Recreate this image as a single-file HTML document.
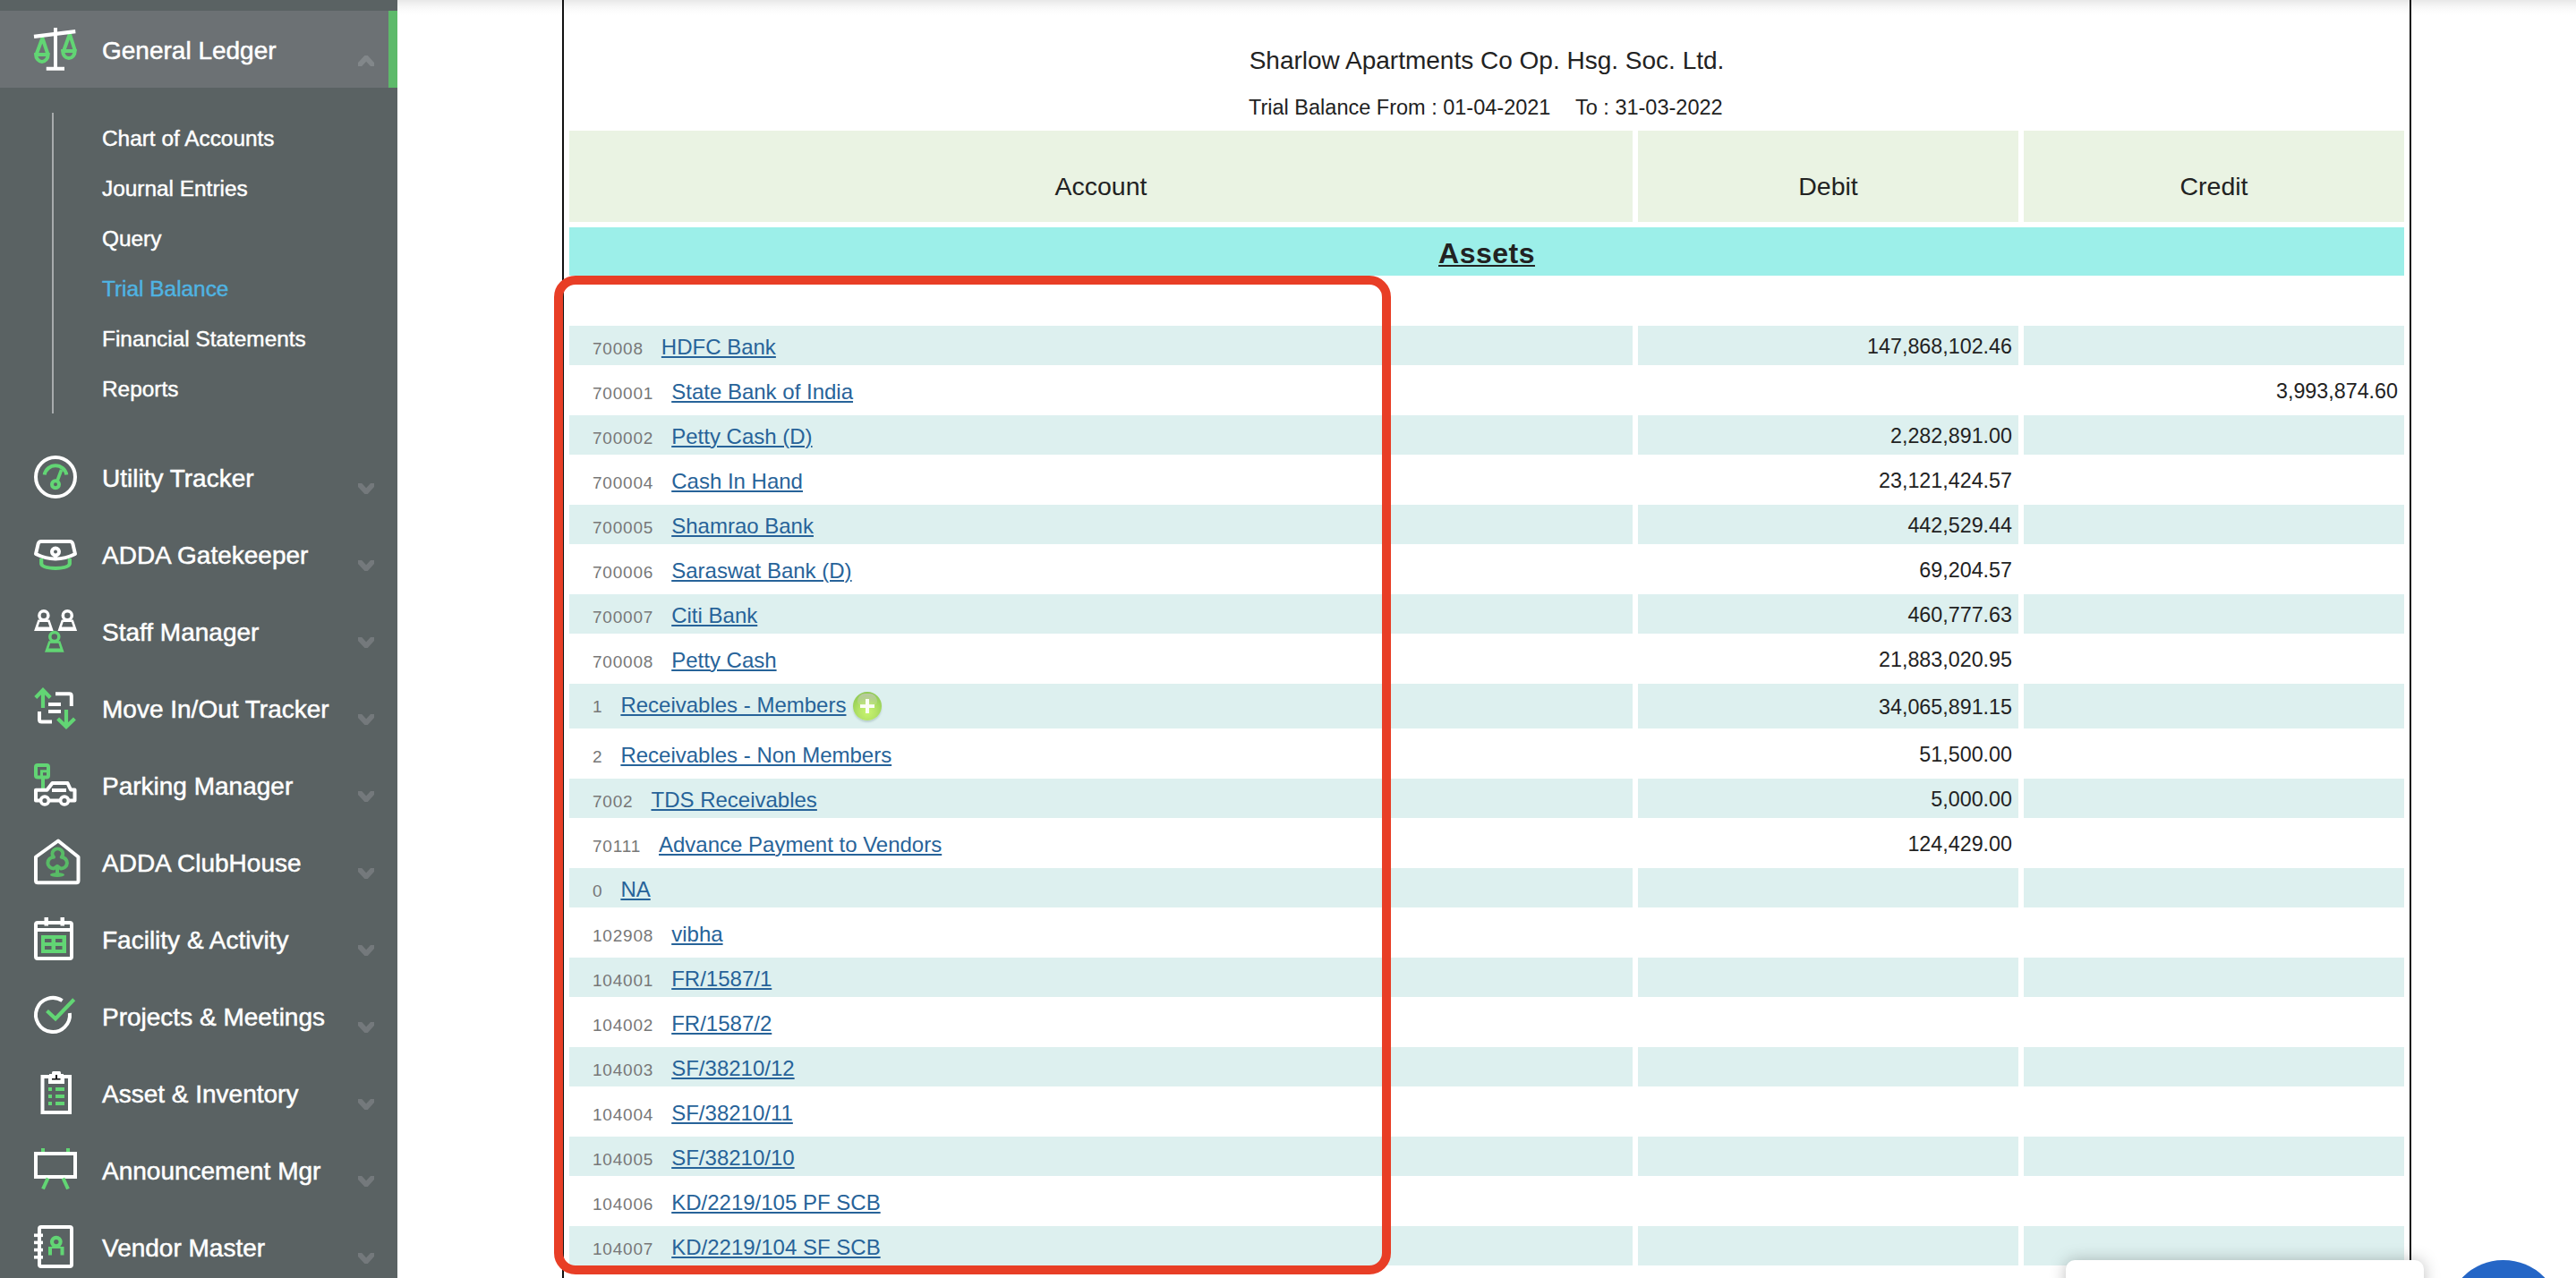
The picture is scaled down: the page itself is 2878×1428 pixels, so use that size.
<!DOCTYPE html>
<html><head><meta charset="utf-8">
<style>
*{box-sizing:border-box;margin:0;padding:0}
html,body{width:2878px;height:1428px;overflow:hidden;background:#fff;font-family:"Liberation Sans",sans-serif}
#sb{position:absolute;left:0;top:0;width:444px;height:1428px;background:#5a6263}
#glh{position:absolute;left:0;top:12px;width:444px;height:86px;background:#6c7174}
#glh .bar{position:absolute;right:0;top:0;width:10px;height:86px;background:#5dba6a}
.ico{position:absolute;left:30px}
.t{position:absolute;left:114px;line-height:1;color:#fff;font-size:28px;white-space:nowrap;-webkit-text-stroke:0.5px #fff}
.chev{position:absolute;left:400px}
#subline{position:absolute;left:58px;top:126px;width:2px;height:336px;background:#a8abad}
.sub{position:absolute;left:114px;color:#fff;font-size:24.4px;white-space:nowrap;line-height:1;-webkit-text-stroke:0.45px currentColor}
#shadow{position:absolute;left:444px;top:0;width:2434px;height:18px;background:linear-gradient(#e8e8e8,#f6f6f6 7px,#fcfcfc 12px,#fff 18px)}
#lline{position:absolute;left:628px;top:0;width:2px;height:1428px;background:#111}
#rline{position:absolute;left:2692px;top:0;width:2px;height:1428px;background:#111}
.title{position:absolute;color:#222;white-space:nowrap;line-height:1}
.hdr{position:absolute;top:146px;height:102px;background:#eaf3e3}
.ht{position:absolute;top:193.9px;color:#222;font-size:28.5px;line-height:1;white-space:nowrap;text-align:center}
.assets{position:absolute;left:636px;top:254px;width:2050px;height:54px;background:#9cefe9}
.at{position:absolute;left:636px;width:2050px;top:266.9px;text-align:center;font-weight:bold;font-size:32px;line-height:1;color:#222;letter-spacing:0.5px}
.at span{text-decoration:underline;text-decoration-thickness:2px;text-underline-offset:2px}
.row{position:absolute;left:636px;width:2050px}
.row .c1,.row .c2,.row .c3{position:absolute;top:0;height:100%}
.row .c1{left:0;width:1188px}
.row .c2{left:1194px;width:425px}
.row .c3{left:1625px;width:425px}
.row.s .c1,.row.s .c2,.row.s .c3{background:#ddf0ef}
.cl{position:absolute;left:26px;top:11.7px;white-space:nowrap;font-size:24px;line-height:1}
.code{display:inline-block;font-size:19px;letter-spacing:0.8px;line-height:1;color:#777;margin-right:20px}
.row a{font-size:24px;line-height:1;color:#276399;text-decoration:underline;text-decoration-thickness:2px;text-underline-offset:2px}
.am{position:absolute;top:12.3px;font-size:23.3px;line-height:1;color:#222;text-align:right;white-space:nowrap}
.am.d{right:438px}
.am.c{right:7px}
.plus{display:inline-block;vertical-align:top;margin-left:8px;margin-top:-3px;position:relative;width:32px;height:32px;border-radius:50%;background:radial-gradient(circle at 50% 70%,#c8f56e 0,#b5e467 35%,#93cd55 75%,#7fb84a 100%);box-shadow:0 2px 2px rgba(120,150,150,0.35)}
.plus:before{content:"";position:absolute;left:8px;top:14px;width:16px;height:4px;background:#fbfdf5}
.plus:after{content:"";position:absolute;left:14px;top:8px;width:4px;height:16px;background:#fbfdf5}
.plus i{position:absolute;left:5px;top:2px;width:22px;height:13px;border-radius:11px 11px 6px 6px;background:linear-gradient(rgba(190,200,170,0.9),rgba(210,240,170,0.2))}
.row.b .am{top:15.3px}
#redbox{position:absolute;left:619px;top:308px;width:935px;height:1116px;border:10px solid #e83e26;border-radius:24px}
#popup{position:absolute;left:2308px;top:1408px;width:400px;height:60px;background:#fff;border-radius:10px;box-shadow:0 0 18px rgba(0,0,0,0.25)}
#fab{position:absolute;left:2733px;top:1408px;width:128px;height:128px;border-radius:50%;background:#2566c6}
</style></head><body>
<div id="sb">
<div id="glh"><div class="bar"></div></div>
<div id="subline"></div>
<div class="sub" style="top:143.3px">Chart of Accounts</div>
<div class="sub" style="top:199.3px">Journal Entries</div>
<div class="sub" style="top:255.3px">Query</div>
<div class="sub" style="top:311.3px;color:#4fb3e2">Trial Balance</div>
<div class="sub" style="top:367.3px">Financial Statements</div>
<div class="sub" style="top:423.3px">Reports</div>
<svg class="ico" style="top:23px" width="64" height="64" viewBox="0 0 64 64"><rect x="30" y="8" width="4" height="47" fill="#ffffff"/><rect x="21.75" y="51.75" width="20.25" height="4" fill="#ffffff"/>
<path d="M10.5 38 L17.4 19.5 L23.6 38" fill="none" stroke="#62d574" stroke-width="4" stroke-linejoin="round"/>
<path d="M10.1 37.9 H23.7 A6.8 8 0 0 1 10.1 37.9 Z" fill="none" stroke="#62d574" stroke-width="4"/>
<path d="M41 34.2 L47.9 15 L54 34.2" fill="none" stroke="#62d574" stroke-width="4" stroke-linejoin="round"/>
<path d="M40.1 34.1 H53.7 A6.8 7.9 0 0 1 40.1 34.1 Z" fill="none" stroke="#62d574" stroke-width="4"/>
<line x1="8" y1="17.9" x2="54.3" y2="12.1" stroke="#ffffff" stroke-width="4.3"/></svg>
<div class="t" style="top:42.7px">General Ledger</div>
<svg class="chev" style="top:62px" width="18" height="12" viewBox="0 0 18 12"><path d="M0 12 H4.2 L9.1 6.7 L14 12 H18 V8 L10.8 0 H7.4 L0 8 Z" fill="#82878a"/></svg>
<svg class="ico" style="top:501px" width="64" height="64" viewBox="0 0 64 64"><circle cx="32" cy="32" r="22" fill="none" stroke="#ffffff" stroke-width="4"/>
<path d="M19.7 29.5 A12.5 12.5 0 0 1 44.3 29.5" fill="none" stroke="#62d574" stroke-width="4"/>
<line x1="34.3" y1="35.5" x2="38.6" y2="24" stroke="#62d574" stroke-width="3.6"/>
<circle cx="32" cy="40.2" r="4" fill="none" stroke="#62d574" stroke-width="4"/></svg>
<div class="t" style="top:520.7px">Utility Tracker</div>
<svg class="chev" style="top:540px" width="18" height="12" viewBox="0 0 18 12"><path d="M0 0 H4.2 L9.1 5.3 L14 0 H18 V4 L10.8 12 H7.4 L0 4 Z" fill="#74797c"/></svg>
<svg class="ico" style="top:587px" width="64" height="64" viewBox="0 0 64 64"><path d="M16 18 H48 Q50.5 18 51.3 20.5 L54 32 Q32 43 10 32 L12.7 20.5 Q13.5 18 16 18 Z" fill="none" stroke="#ffffff" stroke-width="4" stroke-linejoin="round"/>
<circle cx="32" cy="29.5" r="4" fill="none" stroke="#ffffff" stroke-width="4"/><rect x="30" y="33" width="4" height="4" fill="#ffffff"/>
<path d="M16.2 37 V43 Q17 47.5 32 48 Q47 47.5 47.8 43 V37" fill="none" stroke="#62d574" stroke-width="4.2"/></svg>
<div class="t" style="top:606.7px">ADDA Gatekeeper</div>
<svg class="chev" style="top:626px" width="18" height="12" viewBox="0 0 18 12"><path d="M0 0 H4.2 L9.1 5.3 L14 0 H18 V4 L10.8 12 H7.4 L0 4 Z" fill="#74797c"/></svg>
<svg class="ico" style="top:673px" width="64" height="64" viewBox="0 0 64 64"><path fill-rule="evenodd" fill="#ffffff" d="M12.149999999999999 14.8 a6.75 6.75 0 1 0 13.5 0 a6.75 6.75 0 1 0 -13.5 0 Z M15.649999999999999 14.8 a3.25 3.25 0 1 0 6.5 0 a3.25 3.25 0 1 0 -6.5 0 Z"/>
<path fill-rule="evenodd" fill="#ffffff" d="M12.399999999999999 19.5 H25.4 L29.7 32.0 H8.099999999999998 Z M14.299999999999999 22.0 H23.5 L25.299999999999997 27.6 H12.499999999999998 Z"/><path fill-rule="evenodd" fill="#ffffff" d="M38.55 14.8 a6.75 6.75 0 1 0 13.5 0 a6.75 6.75 0 1 0 -13.5 0 Z M42.05 14.8 a3.25 3.25 0 1 0 6.5 0 a3.25 3.25 0 1 0 -6.5 0 Z"/>
<path fill-rule="evenodd" fill="#ffffff" d="M38.8 19.5 H51.8 L56.099999999999994 32.0 H34.5 Z M40.699999999999996 22.0 H49.9 L51.699999999999996 27.6 H38.9 Z"/><path fill-rule="evenodd" fill="#62d574" d="M24.05 38.6 a6.75 6.75 0 1 0 13.5 0 a6.75 6.75 0 1 0 -13.5 0 Z M27.55 38.6 a3.25 3.25 0 1 0 6.5 0 a3.25 3.25 0 1 0 -6.5 0 Z"/>
<path fill-rule="evenodd" fill="#62d574" d="M24.3 43.300000000000004 H37.3 L41.6 55.8 H20.0 Z M26.200000000000003 45.800000000000004 H35.4 L37.2 51.400000000000006 H24.4 Z"/></svg>
<div class="t" style="top:692.7px">Staff Manager</div>
<svg class="chev" style="top:712px" width="18" height="12" viewBox="0 0 18 12"><path d="M0 0 H4.2 L9.1 5.3 L14 0 H18 V4 L10.8 12 H7.4 L0 4 Z" fill="#74797c"/></svg>
<svg class="ico" style="top:759px" width="64" height="64" viewBox="0 0 64 64"><path d="M18 32 V12 M9.8 20.5 L18 12 L26.2 20.5" fill="none" stroke="#62d574" stroke-width="4.2"/>
<path d="M32 16.2 H47.5 Q49.8 16.2 49.8 18.5 V30" fill="none" stroke="#ffffff" stroke-width="4"/>
<rect x="24" y="26" width="14" height="4" fill="#ffffff"/><rect x="24" y="34" width="14" height="4" fill="#ffffff"/>
<path d="M14 36 V45 Q14 47.6 16.5 47.6 H28" fill="none" stroke="#ffffff" stroke-width="4"/>
<path d="M44 34 V53 M34.6 44 L44 53 L53.4 44" fill="none" stroke="#62d574" stroke-width="4.2"/></svg>
<div class="t" style="top:778.7px">Move In/Out Tracker</div>
<svg class="chev" style="top:798px" width="18" height="12" viewBox="0 0 18 12"><path d="M0 0 H4.2 L9.1 5.3 L14 0 H18 V4 L10.8 12 H7.4 L0 4 Z" fill="#74797c"/></svg>
<svg class="ico" style="top:845px" width="64" height="64" viewBox="0 0 64 64"><rect x="10" y="10" width="14" height="13.5" rx="2" fill="none" stroke="#62d574" stroke-width="4"/>
<path d="M16.5 22 V16.8 H22" fill="none" stroke="#62d574" stroke-width="3"/>
<rect x="16" y="24" width="4" height="12" fill="#62d574"/>
<path d="M10 37.8 H22.5 L28.5 30 H45.5 L49 37.5 H53.5 V49.5 H10 Z" fill="none" stroke="#ffffff" stroke-width="4" stroke-linejoin="round"/>
<rect x="28" y="36" width="16" height="4" fill="#ffffff"/>
<circle cx="20" cy="49.5" r="4.4" fill="#5a6263" stroke="#ffffff" stroke-width="3.6"/>
<circle cx="42" cy="49.5" r="4.4" fill="#5a6263" stroke="#ffffff" stroke-width="3.6"/></svg>
<div class="t" style="top:864.7px">Parking Manager</div>
<svg class="chev" style="top:884px" width="18" height="12" viewBox="0 0 18 12"><path d="M0 0 H4.2 L9.1 5.3 L14 0 H18 V4 L10.8 12 H7.4 L0 4 Z" fill="#74797c"/></svg>
<svg class="ico" style="top:931px" width="64" height="64" viewBox="0 0 64 64"><path d="M10 26.5 L35 8.5 L57.5 26.5 V53 Q57.5 55.2 55.3 55.2 H12.2 Q10 55.2 10 53 Z" fill="none" stroke="#ffffff" stroke-width="4" stroke-linejoin="round"/>
<g transform="translate(34 33) scale(1.12 1.08) translate(-34 -33)"><path d="M30.4 27.2 A5.2 5.2 0 1 1 38.2 27.2 A5.6 5.6 0 1 1 37.5 39 L34 36.5 L30.5 39 A5.6 5.6 0 1 1 30.4 27.2 Z" fill="none" stroke="#58bb66" stroke-width="3.6" stroke-linejoin="round"/></g>
<rect x="32" y="37" width="4" height="8" fill="#58bb66"/><ellipse cx="34" cy="46.5" rx="8" ry="2.6" fill="#58bb66"/></svg>
<div class="t" style="top:950.7px">ADDA ClubHouse</div>
<svg class="chev" style="top:970px" width="18" height="12" viewBox="0 0 18 12"><path d="M0 0 H4.2 L9.1 5.3 L14 0 H18 V4 L10.8 12 H7.4 L0 4 Z" fill="#74797c"/></svg>
<svg class="ico" style="top:1017px" width="64" height="64" viewBox="0 0 64 64"><rect x="10" y="14" width="40" height="40" rx="2" fill="none" stroke="#ffffff" stroke-width="4"/>
<rect x="12" y="20" width="36" height="4" fill="#ffffff"/>
<rect x="19.5" y="8" width="4.5" height="9.5" fill="#ffffff"/><rect x="37.5" y="8" width="4.5" height="9.5" fill="#ffffff"/>
<path fill-rule="evenodd" fill="#62d574" d="M16 28 H44 V48 H16 Z M20 32 V36 H27.5 V32 Z M32 32 V36 H39.5 V32 Z M20 40 V44 H27.5 V40 Z M32 40 V44 H39.5 V40 Z"/></svg>
<div class="t" style="top:1036.7px">Facility &amp; Activity</div>
<svg class="chev" style="top:1056px" width="18" height="12" viewBox="0 0 18 12"><path d="M0 0 H4.2 L9.1 5.3 L14 0 H18 V4 L10.8 12 H7.4 L0 4 Z" fill="#74797c"/></svg>
<svg class="ico" style="top:1103px" width="64" height="64" viewBox="0 0 64 64"><path d="M39.6 15.2 A19 19 0 1 0 47.9 29" fill="none" stroke="#ffffff" stroke-width="4"/>
<path d="M22.5 26.5 L32 35.3 L52.7 13.7" fill="none" stroke="#62d574" stroke-width="4.2"/></svg>
<div class="t" style="top:1122.7px">Projects &amp; Meetings</div>
<svg class="chev" style="top:1142px" width="18" height="12" viewBox="0 0 18 12"><path d="M0 0 H4.2 L9.1 5.3 L14 0 H18 V4 L10.8 12 H7.4 L0 4 Z" fill="#74797c"/></svg>
<svg class="ico" style="top:1189px" width="64" height="64" viewBox="0 0 64 64"><rect x="17.5" y="14" width="30.5" height="40" fill="none" stroke="#ffffff" stroke-width="4"/>
<rect x="24" y="15" width="18" height="7" fill="#ffffff"/><rect x="28" y="8" width="10" height="5" rx="1.5" fill="#ffffff"/><rect x="25" y="11" width="16" height="5" fill="#ffffff"/>
<rect x="28" y="16" width="9.5" height="1.6" fill="#111"/><rect x="32" y="12" width="2" height="4.5" fill="#111"/>
<g fill="#62d574"><rect x="24" y="26" width="4" height="4"/><rect x="32" y="26" width="10" height="4"/><rect x="24" y="34" width="4" height="4"/><rect x="32" y="34" width="10" height="4"/><rect x="24" y="42" width="4" height="4"/><rect x="32" y="42" width="10" height="4"/></g></svg>
<div class="t" style="top:1208.7px">Asset &amp; Inventory</div>
<svg class="chev" style="top:1228px" width="18" height="12" viewBox="0 0 18 12"><path d="M0 0 H4.2 L9.1 5.3 L14 0 H18 V4 L10.8 12 H7.4 L0 4 Z" fill="#74797c"/></svg>
<svg class="ico" style="top:1275px" width="64" height="64" viewBox="0 0 64 64"><rect x="10" y="14" width="44" height="26" fill="none" stroke="#ffffff" stroke-width="4"/>
<rect x="16" y="8" width="4" height="4" fill="#62d574"/><rect x="44" y="8" width="4" height="4" fill="#62d574"/>
<line x1="23.5" y1="41.5" x2="18" y2="53.5" stroke="#62d574" stroke-width="4"/><line x1="40.5" y1="41.5" x2="46" y2="53.5" stroke="#62d574" stroke-width="4"/></svg>
<div class="t" style="top:1294.7px">Announcement Mgr</div>
<svg class="chev" style="top:1314px" width="18" height="12" viewBox="0 0 18 12"><path d="M0 0 H4.2 L9.1 5.3 L14 0 H18 V4 L10.8 12 H7.4 L0 4 Z" fill="#74797c"/></svg>
<svg class="ico" style="top:1361px" width="64" height="64" viewBox="0 0 64 64"><rect x="14" y="10" width="36" height="44" rx="2" fill="none" stroke="#ffffff" stroke-width="4"/>
<g fill="#ffffff"><rect x="8" y="17.5" width="10" height="3.6"/><rect x="8" y="25.6" width="10" height="3.6"/><rect x="8" y="33.8" width="10" height="3.6"/><rect x="8" y="42" width="10" height="3.6"/></g>
<circle cx="32.8" cy="26.6" r="4.8" fill="none" stroke="#62d574" stroke-width="4.2"/>
<path fill-rule="evenodd" fill="#62d574" d="M24 32 H41.5 V41.5 H37.5 V34 H28 V41.5 H24 Z"/></svg>
<div class="t" style="top:1380.7px">Vendor Master</div>
<svg class="chev" style="top:1400px" width="18" height="12" viewBox="0 0 18 12"><path d="M0 0 H4.2 L9.1 5.3 L14 0 H18 V4 L10.8 12 H7.4 L0 4 Z" fill="#74797c"/></svg>
</div><div id="shadow"></div>
<div id="lline"></div>
<div id="rline"></div>
<div class="title" style="left:636px;width:2050px;text-align:center;top:54.1px;font-size:28px">Sharlow Apartments Co Op. Hsg. Soc. Ltd.</div>
<div class="title" style="left:1395px;top:109px;font-size:23.5px">Trial Balance From : 01-04-2021</div>
<div class="title" style="left:1760px;top:109px;font-size:23.5px">To : 31-03-2022</div>
<div class="hdr" style="left:636px;width:1188px"></div>
<div class="hdr" style="left:1830px;width:425px"></div>
<div class="hdr" style="left:2261px;width:425px"></div>
<div class="ht" style="left:636px;width:1188px">Account</div>
<div class="ht" style="left:1830px;width:425px">Debit</div>
<div class="ht" style="left:2261px;width:425px">Credit</div>
<div class="assets"></div>
<div class="at"><span>Assets</span></div>
<div class="row s" style="top:364px;height:44px"><div class="c1"></div><div class="c2"></div><div class="c3"></div><span class="cl"><span class="code">70008</span><a>HDFC Bank</a></span><span class="am d">147,868,102.46</span><span class="am c"></span></div>
<div class="row" style="top:414px;height:44px"><div class="c1"></div><div class="c2"></div><div class="c3"></div><span class="cl"><span class="code">700001</span><a>State Bank of India</a></span><span class="am d"></span><span class="am c">3,993,874.60</span></div>
<div class="row s" style="top:464px;height:44px"><div class="c1"></div><div class="c2"></div><div class="c3"></div><span class="cl"><span class="code">700002</span><a>Petty Cash (D)</a></span><span class="am d">2,282,891.00</span><span class="am c"></span></div>
<div class="row" style="top:514px;height:44px"><div class="c1"></div><div class="c2"></div><div class="c3"></div><span class="cl"><span class="code">700004</span><a>Cash In Hand</a></span><span class="am d">23,121,424.57</span><span class="am c"></span></div>
<div class="row s" style="top:564px;height:44px"><div class="c1"></div><div class="c2"></div><div class="c3"></div><span class="cl"><span class="code">700005</span><a>Shamrao Bank</a></span><span class="am d">442,529.44</span><span class="am c"></span></div>
<div class="row" style="top:614px;height:44px"><div class="c1"></div><div class="c2"></div><div class="c3"></div><span class="cl"><span class="code">700006</span><a>Saraswat Bank (D)</a></span><span class="am d">69,204.57</span><span class="am c"></span></div>
<div class="row s" style="top:664px;height:44px"><div class="c1"></div><div class="c2"></div><div class="c3"></div><span class="cl"><span class="code">700007</span><a>Citi Bank</a></span><span class="am d">460,777.63</span><span class="am c"></span></div>
<div class="row" style="top:714px;height:44px"><div class="c1"></div><div class="c2"></div><div class="c3"></div><span class="cl"><span class="code">700008</span><a>Petty Cash</a></span><span class="am d">21,883,020.95</span><span class="am c"></span></div>
<div class="row s b" style="top:764px;height:50px"><div class="c1"></div><div class="c2"></div><div class="c3"></div><span class="cl"><span class="code">1</span><a>Receivables - Members</a><span class="plus"><i></i></span></span><span class="am d">34,065,891.15</span><span class="am c"></span></div>
<div class="row" style="top:820px;height:44px"><div class="c1"></div><div class="c2"></div><div class="c3"></div><span class="cl"><span class="code">2</span><a>Receivables - Non Members</a></span><span class="am d">51,500.00</span><span class="am c"></span></div>
<div class="row s" style="top:870px;height:44px"><div class="c1"></div><div class="c2"></div><div class="c3"></div><span class="cl"><span class="code">7002</span><a>TDS Receivables</a></span><span class="am d">5,000.00</span><span class="am c"></span></div>
<div class="row" style="top:920px;height:44px"><div class="c1"></div><div class="c2"></div><div class="c3"></div><span class="cl"><span class="code">70111</span><a>Advance Payment to Vendors</a></span><span class="am d">124,429.00</span><span class="am c"></span></div>
<div class="row s" style="top:970px;height:44px"><div class="c1"></div><div class="c2"></div><div class="c3"></div><span class="cl"><span class="code">0</span><a>NA</a></span><span class="am d"></span><span class="am c"></span></div>
<div class="row" style="top:1020px;height:44px"><div class="c1"></div><div class="c2"></div><div class="c3"></div><span class="cl"><span class="code">102908</span><a>vibha</a></span><span class="am d"></span><span class="am c"></span></div>
<div class="row s" style="top:1070px;height:44px"><div class="c1"></div><div class="c2"></div><div class="c3"></div><span class="cl"><span class="code">104001</span><a>FR/1587/1</a></span><span class="am d"></span><span class="am c"></span></div>
<div class="row" style="top:1120px;height:44px"><div class="c1"></div><div class="c2"></div><div class="c3"></div><span class="cl"><span class="code">104002</span><a>FR/1587/2</a></span><span class="am d"></span><span class="am c"></span></div>
<div class="row s" style="top:1170px;height:44px"><div class="c1"></div><div class="c2"></div><div class="c3"></div><span class="cl"><span class="code">104003</span><a>SF/38210/12</a></span><span class="am d"></span><span class="am c"></span></div>
<div class="row" style="top:1220px;height:44px"><div class="c1"></div><div class="c2"></div><div class="c3"></div><span class="cl"><span class="code">104004</span><a>SF/38210/11</a></span><span class="am d"></span><span class="am c"></span></div>
<div class="row s" style="top:1270px;height:44px"><div class="c1"></div><div class="c2"></div><div class="c3"></div><span class="cl"><span class="code">104005</span><a>SF/38210/10</a></span><span class="am d"></span><span class="am c"></span></div>
<div class="row" style="top:1320px;height:44px"><div class="c1"></div><div class="c2"></div><div class="c3"></div><span class="cl"><span class="code">104006</span><a>KD/2219/105 PF SCB</a></span><span class="am d"></span><span class="am c"></span></div>
<div class="row s" style="top:1370px;height:44px"><div class="c1"></div><div class="c2"></div><div class="c3"></div><span class="cl"><span class="code">104007</span><a>KD/2219/104 SF SCB</a></span><span class="am d"></span><span class="am c"></span></div><div id="redbox"></div>
<div id="popup"></div>
<div id="fab"></div>
</body></html>
